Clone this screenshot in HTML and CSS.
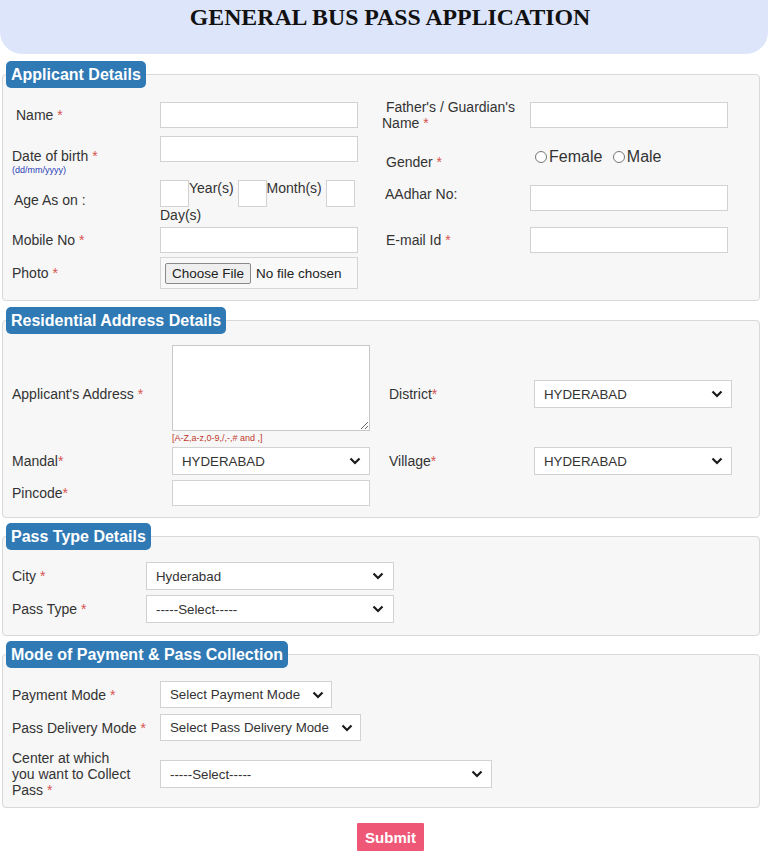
FILE: index.html
```html
<!DOCTYPE html>
<html lang="en">
<head>
<meta charset="utf-8">
<title>General Bus Pass Application</title>
<link rel="stylesheet" href="styles.css">
</head>
<body>
<div class="head"><h1 class="title">GENERAL BUS PASS APPLICATION</h1></div>
<form class="form">
  <fieldset class="box b1">
    <legend class="tag">Applicant Details</legend>
    <div class="grid g1">
      <label class="lbl mid ind4">Name <span class="req">*</span></label>
      <input class="txt mid" type="text">
      <label class="lbl mid">&nbsp;Father's / Guardian's<br>Name <span class="req">*</span></label>
      <input class="txt mid" type="text">

      <div class="lbl end">Date of birth <span class="req">*</span><div class="fmt">(dd/mm/yyyy)</div></div>
      <input class="txt top4" type="text">
      <label class="lbl end mb6 ind4">Gender <span class="req">*</span></label>
      <div class="radios end mb10">
        <label class="rad"><input type="radio" name="g">Female</label>
        <label class="rad"><input type="radio" name="g">Male</label>
      </div>

      <label class="lbl start mt12 ind2">Age As on :</label>
      <div class="age start"><input class="mini" type="text"><span>Year(s)</span> <input class="mini" type="text"><span>Month(s)</span> <input class="mini" type="text"> <span>Day(s)</span></div>
      <label class="lbl start mt6 ind3">AAdhar No:</label>
      <input class="txt start mt5" type="text">

      <label class="lbl mid">Mobile No <span class="req">*</span></label>
      <input class="txt end" type="text">
      <label class="lbl mid ind4">E-mail Id <span class="req">*</span></label>
      <input class="txt end" type="text">

      <label class="lbl mid">Photo <span class="req">*</span></label>
      <div class="filebox"><input type="file" class="file"></div>
    </div>
  </fieldset>

  <fieldset class="box b2">
    <legend class="tag">Residential Address Details</legend>
    <div class="grid g2">
      <label class="lbl mid">Applicant's Address <span class="req">*</span></label>
      <div class="addr"><textarea class="area"></textarea><div class="hint">[A-Z,a-z,0-9,/,-,# and ,]</div></div>
      <label class="lbl mid">District<span class="req">*</span></label>
      <div class="sel mid w198"><select><option>HYDERABAD</option></select><svg class="chev" viewBox="0 0 12 8"><path d="M1.5 1.5l4.5 4.5 4.5-4.5"/></svg></div>

      <label class="lbl mid">Mandal<span class="req">*</span></label>
      <div class="sel mid w198"><select><option>HYDERABAD</option></select><svg class="chev" viewBox="0 0 12 8"><path d="M1.5 1.5l4.5 4.5 4.5-4.5"/></svg></div>
      <label class="lbl mid">Village<span class="req">*</span></label>
      <div class="sel mid w198"><select><option>HYDERABAD</option></select><svg class="chev" viewBox="0 0 12 8"><path d="M1.5 1.5l4.5 4.5 4.5-4.5"/></svg></div>

      <label class="lbl mid">Pincode<span class="req">*</span></label>
      <input class="txt end" type="text">
    </div>
  </fieldset>

  <fieldset class="box b3">
    <legend class="tag">Pass Type Details</legend>
    <div class="grid g3">
      <label class="lbl mid">City <span class="req">*</span></label>
      <div class="sel mid w248"><select><option>Hyderabad</option></select><svg class="chev" viewBox="0 0 12 8"><path d="M1.5 1.5l4.5 4.5 4.5-4.5"/></svg></div>
      <label class="lbl mid">Pass Type <span class="req">*</span></label>
      <div class="sel mid w248"><select><option>-----Select-----</option></select><svg class="chev" viewBox="0 0 12 8"><path d="M1.5 1.5l4.5 4.5 4.5-4.5"/></svg></div>
    </div>
  </fieldset>

  <fieldset class="box b4">
    <legend class="tag">Mode of Payment &amp; Pass Collection</legend>
    <div class="grid g4">
      <label class="lbl mid">Payment Mode <span class="req">*</span></label>
      <div class="sel mid w172"><select><option>Select Payment Mode</option></select><svg class="chev" viewBox="0 0 12 8"><path d="M1.5 1.5l4.5 4.5 4.5-4.5"/></svg></div>
      <label class="lbl mid">Pass Delivery Mode <span class="req">*</span></label>
      <div class="sel mid w201"><select><option>Select Pass Delivery Mode</option></select><svg class="chev" viewBox="0 0 12 8"><path d="M1.5 1.5l4.5 4.5 4.5-4.5"/></svg></div>
      <label class="lbl mid">Center at which<br>you want to Collect<br>Pass <span class="req">*</span></label>
      <div class="sel mid w332"><select><option>-----Select-----</option></select><svg class="chev" viewBox="0 0 12 8"><path d="M1.5 1.5l4.5 4.5 4.5-4.5"/></svg></div>
    </div>
  </fieldset>

  <div class="actions"><button type="button" class="submit">Submit</button></div>
</form>
</body>
</html>
```

FILE: styles.css
```css
* { box-sizing: border-box; }
html, body { margin: 0; padding: 0; background: #fff; }
body {
  font-family: "Liberation Sans", Arial, sans-serif;
  font-size: 14px;
  color: #333;
  width: 768px;
  height: 858px;
  overflow: hidden;
}

.head {
  height: 54px;
  background: #dde5fb;
  border-radius: 0 0 22px 22px;
  padding-top: 4px;
}
.title {
  margin: 0;
  padding-left: 12px;
  text-align: center;
  font-family: "Liberation Serif", "Times New Roman", serif;
  font-weight: bold;
  font-size: 23.8px;
  line-height: 27px;
  color: #111;
}

.form { margin: 0; }

.box {
  width: 758px;
  margin: 5px 0 0 2px;
  padding: 0;
  border: 1px solid #d9d9d9;
  border-radius: 4px;
  background: #f7f7f7;
  min-width: 0;
}
.b1 { margin-top: 7px; }
.b2 { margin-top: 6px; }

.tag {
  margin-left: 3px;
  padding: 4px 5px;
  background: #2f79b5;
  color: #fff;
  font-weight: bold;
  font-size: 16px;
  line-height: 19px;
  border-radius: 5px;
}

.grid {
  display: grid;
  padding-left: 9px;
}
.g1 {
  grid-template-columns: 148px 222px 148px 198px;
  grid-template-rows: 26px 44px 42px 27px 32px;
  row-gap: 4px;
  padding-top: 14px;
  padding-bottom: 11px;
}
.g2 {
  grid-template-columns: 160px 217px 145px 198px;
  grid-template-rows: 98px 28px 27px;
  row-gap: 4px;
  padding-top: 11px;
  padding-bottom: 11px;
}
.g3 {
  grid-template-columns: 134px 248px;
  grid-template-rows: 28px 28px;
  row-gap: 5px;
  padding-top: 12px;
  padding-bottom: 12px;
}
.g4 {
  grid-template-columns: 148px 340px;
  grid-template-rows: 27px 27px 50px;
  row-gap: 6px;
  padding-top: 13px;
  padding-bottom: 10px;
}
.g4 > :nth-child(5), .g4 > :nth-child(6) { margin-top: 4px; }

.lbl { line-height: 16px; color: #333; font-size: 14px; }
.req { color: #d9534f; }
.ind2 { padding-left: 2px; }
.ind3 { padding-left: 3px; }
.ind4 { padding-left: 4px; }
.mid { align-self: center; }
.start { align-self: start; }
.end { align-self: end; }
.top4 { align-self: start; margin-top: 4px; }
.mt5 { margin-top: 5px; }
.mt6 { margin-top: 6px; }
.mt12 { margin-top: 12px; }
.mb6 { margin-bottom: 6px; }
.mb10 { margin-bottom: 10px; }

.fmt {
  font-size: 9px;
  line-height: 12px;
  color: #2b3fb8;
}

.txt {
  width: 198px;
  height: 26px;
  border: 1px solid #d2d2d2;
  background: #fff;
  padding: 2px 6px;
  font: 13px "Liberation Sans", Arial, sans-serif;
  border-radius: 0;
  outline: none;
}

.radios {
  font-size: 16px;
  line-height: 18px;
  color: #333;
  padding-left: 5px;
}
.rad { margin-right: 6px; }
.rad input {
  appearance: none;
  width: 12px;
  height: 12px;
  border: 1px solid #777;
  border-radius: 50%;
  margin: 0 2px 0 0;
  vertical-align: -1px;
  background: #fff;
}

.age {
  width: 198px;
  line-height: 16px;
  font-size: 14px;
}
.age span { vertical-align: top; }
.mini {
  width: 29px;
  height: 27px;
  border: 1px solid #d2d2d2;
  background: #fff;
  vertical-align: top;
  padding: 0;
  margin: 0;
}

.filebox {
  width: 198px;
  height: 32px;
  border: 1px solid #d6d6d6;
  background: #f9f9f9;
  padding: 5px 4px;
}
.file {
  font: 13.5px "Liberation Sans", Arial, sans-serif;
  color: #222;
  width: 188px;
}
.file::file-selector-button {
  font: 13.5px "Liberation Sans", Arial, sans-serif;
  height: 21px;
  padding: 0 6px;
  margin-right: 5px;
  border: 1px solid #8a8a8a;
  border-radius: 2px;
  background: #efefef;
  color: #222;
}

.addr { align-self: start; }
.area {
  display: block;
  width: 198px;
  height: 86px;
  border: 1px solid #c8c8c8;
  background: #fff;
  resize: both;
  margin: 0;
  font: 13px "Liberation Sans", Arial, sans-serif;
}
.hint {
  font-size: 9px;
  line-height: 12px;
  color: #c0392b;
  padding-top: 1px;
}

.sel {
  position: relative;
  height: 28px;
}
.sel select {
  appearance: none;
  -webkit-appearance: none;
  width: 100%;
  height: 100%;
  border: 1px solid #d2d2d2;
  background: #fff;
  border-radius: 0;
  padding: 0 24px 0 9px;
  font: 13.3px "Liberation Sans", Arial, sans-serif;
  color: #333;
  outline: none;
}
.chev {
  position: absolute;
  right: 9px;
  top: 10px;
  width: 12px;
  height: 8px;
  fill: none;
  stroke: #1a1a1a;
  stroke-width: 2.2;
  pointer-events: none;
}
.w198 { width: 198px; }
.w248 { width: 248px; }
.w172 { width: 172px; height: 27px; }
.w201 { width: 201px; height: 27px; }
.w332 { width: 332px; }
.w172 .chev, .w201 .chev { right: 8px; top: 10px; }
.w248 .chev { right: 10px; }

.actions {
  display: flex;
  justify-content: center;
  padding-left: 13px;
  margin-top: 15px;
}
.submit {
  width: 67px;
  height: 28px;
  border: none;
  border-radius: 1px;
  background: #ef5777;
  color: #fff;
  font: bold 15px "Liberation Sans", Arial, sans-serif;
  padding: 0;
}
```
